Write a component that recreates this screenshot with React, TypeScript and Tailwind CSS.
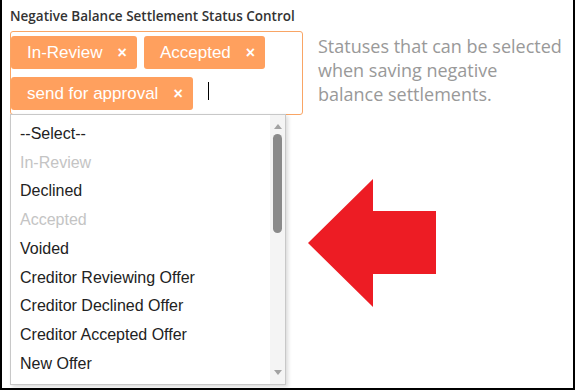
import React from "react";

const items: { label: string; disabled?: boolean }[] = [
  { label: "--Select--" },
  { label: "In-Review", disabled: true },
  { label: "Declined" },
  { label: "Accepted", disabled: true },
  { label: "Voided" },
  { label: "Creditor Reviewing Offer" },
  { label: "Creditor Declined Offer" },
  { label: "Creditor Accepted Offer" },
  { label: "New Offer" },
];

function Tag({ text }: { text: string }) {
  return (
    <div className="flex h-[33px] items-center rounded-[3px] bg-[#ffa05e] pl-[16px] pr-[10px] text-[17px] text-white [font-family:'Liberation_Sans',Arial,sans-serif]">
      <span>{text}</span>
      <span className="ml-[15px] text-[16px] font-bold leading-none">×</span>
    </div>
  );
}

export default function App() {
  return (
    <div className="relative h-[390px] w-[575px] overflow-hidden border-x-2 border-b-2 border-black bg-white">
      <div className="pl-[8px] pt-[8px] text-[13.5px] font-semibold leading-[17px] text-[#333] [font-family:'Open_Sans',sans-serif]">
        Negative Balance Settlement Status Control
      </div>
      <div className="mt-[6px] flex pl-[8px]">
        <div className="flex h-[84px] w-[293px] flex-wrap content-start gap-x-[7px] gap-y-[8px] rounded-[3px] border border-[#f9a565] pt-[4px]">
          <Tag text="In-Review" />
          <Tag text="Accepted" />
          <Tag text="send for approval" />
          <div className="ml-[8px] mt-[5px] h-[18px] w-px bg-black" />
        </div>
        <div className="ml-[15px] mt-[3px] text-[18px] leading-[24px] text-[#999] [font-family:'Open_Sans',sans-serif]">
          Statuses that can be selected
          <br />
          when saving negative
          <br />
          balance settlements.
        </div>
      </div>

      {/* dropdown list */}
      <div className="absolute left-[8px] top-[114px] flex h-[271px] w-[276px] border border-[#c8c8c8] bg-white shadow-[2px_2px_4px_rgba(0,0,0,0.15)]">
        <div className="flex-1 pl-[9px] pt-[5px] text-[16px] leading-[28.7px] [font-family:'Liberation_Sans',Arial,sans-serif]">
          {items.map((it) => (
            <div key={it.label} className={it.disabled ? "text-[#c4c4c4]" : "text-[#222]"}>
              {it.label}
            </div>
          ))}
        </div>
        <div className="flex w-[15px] flex-col items-center bg-[#f4f4f4]">
          <div className="mt-[9px] h-0 w-0 border-x-[4px] border-b-[5px] border-x-transparent border-b-[#a3a3a3]" />
          <div className="mt-[5px] h-[99px] w-[9px] rounded-full bg-[#8a8a8a]" />
          <div className="flex-1" />
          <div className="mb-[9px] h-0 w-0 border-x-[4px] border-t-[5px] border-x-transparent border-t-[#a3a3a3]" />
        </div>
      </div>

      {/* red arrow */}
      <svg className="absolute left-0 top-0" width="575" height="390" viewBox="0 0 575 390">
        <polygon
          points="308,243 373,179 373,211 436,211 436,274 373,274 373,307"
          transform="translate(-2,0)"
          fill="#ed1c24"
        />
      </svg>
    </div>
  );
}
